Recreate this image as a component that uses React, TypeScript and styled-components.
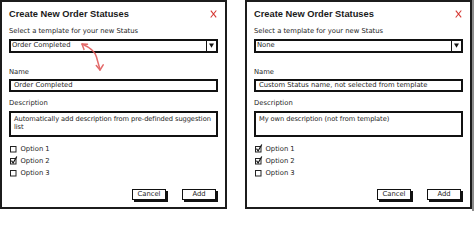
import styled, { createGlobalStyle } from 'styled-components';

type Dialog = {
  template: string;
  name: string;
  description: string;
  checked: boolean[];
  linked?: boolean;
};

const dialogs: Dialog[] = [
  {
    template: 'Order Completed',
    name: 'Order Completed',
    description: 'Automatically add description from pre-definded suggestion\nlist',
    checked: [false, true, false],
    linked: true,
  },
  {
    template: 'None',
    name: 'Custom Status name, not selected from template',
    description: 'My own description (not from template)',
    checked: [true, true, false],
  },
];

export default function App() {
  return (
    <>
      <GlobalStyle />
      <Stage>
        {dialogs.map((d, i) => (
          <Panel key={i}>
            <Header>
              <Title>Create New Order Statuses</Title>
              <Close viewBox="0 0 7 8" width="7" height="8">
                <path d="M0.8 0.6 L6.2 7.4 M6.3 0.5 L0.7 7.5" />
              </Close>
            </Header>

            <Label $top={7}>Select a template for your new Status</Label>
            <Select>
              <SelectValue>{d.template}</SelectValue>
              <SelectToggle>
                <svg viewBox="0 0 5 5" width="5" height="5">
                  <path d="M0 0.4 H5 L2.5 4.8 Z" fill="#111" />
                </svg>
              </SelectToggle>
            </Select>

            <Label $top={15.5}>Name</Label>
            <TextField>{d.name}</TextField>

            <Label $top={7}>Description</Label>
            <TextArea>{d.description}</TextArea>

            <Options>
              {d.checked.map((on, n) => (
                <OptionRow key={n}>
                  <svg viewBox="0 0 8 8" width="8" height="8" overflow="visible">
                    <rect x="1.5" y="1.5" width="5.5" height="5.5" fill="#fff" stroke="#222" strokeWidth="1" />
                    {on && (
                      <path d="M2.5 3.7 L4.1 6 L7.8 -0.5" fill="none" stroke="#111" strokeWidth="1.2" />
                    )}
                  </svg>
                  Option {n + 1}
                </OptionRow>
              ))}
            </Options>

            <Actions>
              <Button>Cancel</Button>
              <Button>Add</Button>
            </Actions>

            {d.linked && (
              <LinkArrow viewBox="0 0 26 32" width="26" height="32">
                <path d="M2 2 C9 5, 15 9, 16.5 15 S 19 23, 20 28" />
                <path d="M7.5 2.2 L2 2 L4 7.4" />
                <path d="M16.3 23.6 L20 28 L23.2 22.8" />
              </LinkArrow>
            )}
          </Panel>
        ))}
      </Stage>
    </>
  );
}

const GlobalStyle = createGlobalStyle`
  html, body {
    margin: 0;
    padding: 0;
    background: #fff;
  }
  body {
    font-family: "DejaVu Sans", "Liberation Sans", sans-serif;
    color: #1e1e1e;
  }
`;

const Stage = styled.div`
  display: flex;
  gap: 18px;
  width: 474px;
  height: 211px;
  overflow: hidden;
  background: linear-gradient(to right, #fff 472px, #8c8c8c 472px);
`;

const Panel = styled.section`
  position: relative;
  box-sizing: border-box;
  width: 227px;
  height: 209px;
  flex-shrink: 0;
  border: 2px solid #1c1c1c;
  padding: 6px 7px 0;
  display: flex;
  flex-direction: column;
  background: #fff;
`;

const Header = styled.div`
  display: flex;
  justify-content: space-between;
  align-items: center;
  height: 12px;
`;

const Title = styled.h2`
  margin: 0;
  font: bold 9.3px/12px "Liberation Sans", Arial, sans-serif;
  color: #1a1a1a;
  white-space: nowrap;
`;

const Close = styled.svg`
  margin-right: 1px;
  fill: none;
  stroke: #d63b36;
  stroke-width: 1.1;
`;

const Label = styled.div<{ $top: number }>`
  margin-top: ${(p) => p.$top}px;
  height: 8px;
  font-size: 6.8px;
  line-height: 8px;
  white-space: nowrap;
`;

const Select = styled.div`
  margin-top: 4px;
  box-sizing: border-box;
  height: 13.5px;
  border: 2px solid #111;
  display: flex;
  align-items: stretch;
`;

const SelectValue = styled.div`
  flex: 1;
  padding-left: 1px;
  font-size: 6.8px;
  line-height: 9.5px;
  white-space: nowrap;
`;

const SelectToggle = styled.div`
  width: 9px;
  border-left: 1.5px solid #111;
  display: flex;
  align-items: center;
  justify-content: center;
`;

const TextField = styled.div`
  margin-top: 3px;
  box-sizing: border-box;
  height: 12.5px;
  border: 2px solid #111;
  padding: 0 3px;
  font-size: 6.8px;
  line-height: 8.5px;
  white-space: nowrap;
  overflow: hidden;
`;

const TextArea = styled.div`
  margin-top: 4px;
  box-sizing: border-box;
  height: 26px;
  border: 2px solid #111;
  padding: 3.5px 0 0 3px;
  font-size: 6.7px;
  letter-spacing: -0.08px;
  line-height: 7.5px;
  white-space: pre;
`;

const Options = styled.div`
  margin-top: 8.4px;
  display: flex;
  flex-direction: column;
  gap: 4.3px;
`;

const OptionRow = styled.div`
  display: flex;
  align-items: center;
  gap: 3.5px;
  height: 8px;
  font-size: 6.8px;
  line-height: 8px;
`;

const Actions = styled.div`
  margin-top: 11.2px;
  padding-right: 2px;
  display: flex;
  justify-content: flex-end;
  gap: 16px;
`;

const Button = styled.button`
  box-sizing: border-box;
  width: 34px;
  height: 11px;
  padding: 0;
  border: 1px solid #111;
  border-radius: 0;
  box-shadow: 2px 2px 0 #111;
  background: #fff;
  font-family: "DejaVu Sans", sans-serif;
  font-size: 6.8px;
  line-height: 9px;
  color: #1e1e1e;
`;

const LinkArrow = styled.svg`
  position: absolute;
  left: 78px;
  top: 40px;
  fill: none;
  stroke: #e05a5a;
  stroke-width: 1.5;
  stroke-linecap: round;
  stroke-linejoin: round;
  opacity: 0.9;
`;
